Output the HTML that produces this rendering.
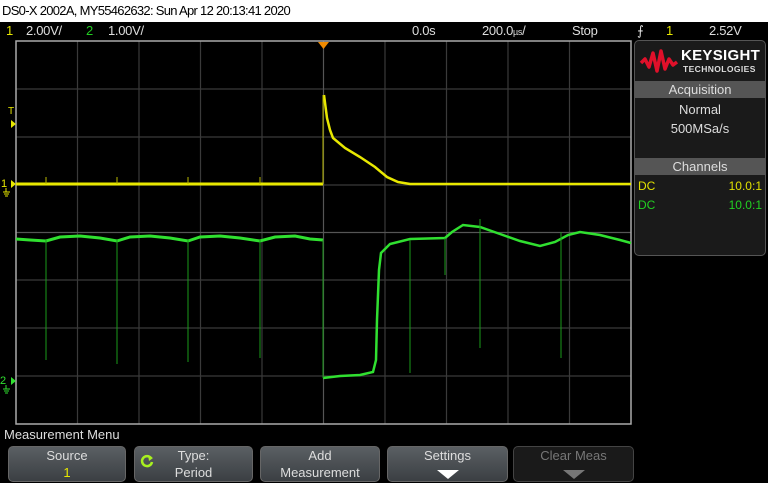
<!DOCTYPE html>
<html><head><meta charset="utf-8"><style>
*{margin:0;padding:0;box-sizing:border-box}
body{width:768px;height:483px;background:#000;position:relative;overflow:hidden;font-family:"Liberation Sans",sans-serif;}
.title{position:absolute;left:0;top:0;width:768px;height:22px;background:#fff;color:#000;font-size:13px;line-height:22px;padding-left:2px;letter-spacing:-0.7px}
.bar{position:absolute;top:22px;height:18px;font-size:13px;line-height:18px;color:#ddd;letter-spacing:-0.3px}
.panel{position:absolute;left:634px;width:132px;background:#1a1a1a;border:1px solid #555;border-radius:4px}
.hdr{background:#555;color:#ddd;text-align:center;font-size:13px;height:17px;line-height:17px}
.btn{position:absolute;top:446px;height:36px;border:1px solid #666;border-radius:5px;background:linear-gradient(#5a5f63,#3b3f43);color:#ddd;text-align:center;font-size:13px;line-height:17px}
</style></head><body>
<div class="title">DS0-X 2002A, MY55462632: Sun Apr 12 20:13:41 2020</div>
<div class="bar" style="left:6px;color:#e6e600">1</div>
<div class="bar" style="left:26px">2.00V/</div>
<div class="bar" style="left:86px;color:#22cc22">2</div>
<div class="bar" style="left:108px">1.00V/</div>
<div class="bar" style="left:412px">0.0s</div>
<div class="bar" style="left:482px">200.0<span style="font-size:9px">µs</span>/</div>
<div class="bar" style="left:572px">Stop</div>
<div class="bar" style="left:637px">⨍</div>
<div class="bar" style="left:666px;color:#e6e600">1</div>
<div class="bar" style="left:709px">2.52V</div>

<svg style="position:absolute;left:0;top:0" width="768" height="483">
<g stroke="#3a3a3a" stroke-width="1.2">
<line x1="77.5" y1="41" x2="77.5" y2="424"/><line x1="139" y1="41" x2="139" y2="424"/><line x1="200.5" y1="41" x2="200.5" y2="424"/><line x1="262" y1="41" x2="262" y2="424"/><line x1="385" y1="41" x2="385" y2="424"/><line x1="446.5" y1="41" x2="446.5" y2="424"/><line x1="508" y1="41" x2="508" y2="424"/><line x1="569.5" y1="41" x2="569.5" y2="424"/>
<line x1="16" y1="89" x2="631" y2="89"/><line x1="16" y1="137" x2="631" y2="137"/><line x1="16" y1="185" x2="631" y2="185"/><line x1="16" y1="280" x2="631" y2="280"/><line x1="16" y1="328" x2="631" y2="328"/><line x1="16" y1="376" x2="631" y2="376"/>
<line x1="323.5" y1="41" x2="323.5" y2="424" stroke="#555"/><line x1="16" y1="232.5" x2="631" y2="232.5" stroke="#555"/>
</g>
<rect x="16" y="41" width="615" height="383" fill="none" stroke="#aaa" stroke-width="1.5"/>
<polygon points="318,42 329,42 323.5,49" fill="#f08a00"/>
<polyline fill="none" stroke="#e8e800" stroke-width="3" points="16,184 323,184"/>
<polyline fill="none" stroke="#e8e800" stroke-width="2.5" points="324,95 327,118 330,130 333,138 345,148 360,157 375,167 387,177 398,182 410,184 631,184"/>
<g stroke="#b8b800" stroke-width="1"><line x1="46" y1="177" x2="46" y2="184"/><line x1="117" y1="177" x2="117" y2="184"/><line x1="188" y1="177" x2="188" y2="184"/><line x1="260" y1="177" x2="260" y2="184"/><line x1="323" y1="95" x2="323" y2="184"/></g>
<polyline fill="none" stroke="#30e030" stroke-width="3" points="16,239 30,240 46,241 60,237 80,236 100,238 117,241 130,237 150,236 170,238 188,241 200,237 220,236 240,238 260,241 275,237 295,236 310,239 323,240"/>
<polyline fill="none" stroke="#30e030" stroke-width="2.5" points="323,378 340,376 360,375 373,372 376,360 377,320 379,270 381,253 390,244 410,239 445,238 452,232 463,225 480,227 500,234 520,241 540,246 555,242 568,235 580,232 600,235 620,240 631,243"/>
<g stroke="#1a9a1a" stroke-width="1"><line x1="46" y1="240" x2="46" y2="360"/><line x1="117" y1="240" x2="117" y2="364"/><line x1="188" y1="240" x2="188" y2="362"/><line x1="260" y1="240" x2="260" y2="358"/><line x1="410" y1="240" x2="410" y2="373"/><line x1="445" y1="238" x2="445" y2="275"/><line x1="480" y1="219" x2="480" y2="348"/><line x1="561" y1="232" x2="561" y2="358"/><line x1="323" y1="240" x2="323" y2="378"/></g>
<text x="8" y="114" fill="#e8e800" font-size="10" font-family="Liberation Sans">T</text>
<polygon points="11,120 16,124 11,128" fill="#e8e800"/>
<text x="1" y="187" fill="#e8e800" font-size="11" font-family="Liberation Sans">1</text>
<polygon points="11,180 16,184 11,188" fill="#e8e800"/>
<path d="M6,188 v4 M3,192 h7 M4,194 h5 M5,196 h3" stroke="#e8e800" stroke-width="1"/>
<text x="0" y="384" fill="#30e030" font-size="11" font-family="Liberation Sans">2</text>
<polygon points="11,377 16,381 11,385" fill="#30e030"/>
<path d="M6,385 v4 M3,389 h7 M4,391 h5 M5,393 h3" stroke="#30e030" stroke-width="1"/>
</svg>

<div class="panel" style="top:40px;height:216px;border-radius:5px">
<div style="height:40px;position:relative">
<svg style="position:absolute;left:4px;top:6px" width="40" height="30"><polyline fill="none" stroke="#e0102a" stroke-width="3.5" stroke-linejoin="round" points="2,16 6,12 10,20 14,6 18,24 22,4 26,22 30,12 34,18 38,15"/></svg>
<div style="position:absolute;left:46px;top:6px;color:#fff;font-weight:bold;font-size:15px;letter-spacing:0.3px">KEYSIGHT</div>
<div style="position:absolute;left:48px;top:23px;color:#ddd;font-weight:bold;font-size:8.5px;letter-spacing:0.4px">TECHNOLOGIES</div>
</div>
<div class="hdr">Acquisition</div>
<div style="color:#ddd;text-align:center;font-size:13px;line-height:19px;margin-top:2px">Normal<br>500MSa/s</div>
<div class="hdr" style="margin-top:20px">Channels</div>
<div style="font-size:12px;line-height:19px;padding:0 3px;margin-top:2px">
<div style="color:#e0e000;display:flex;justify-content:space-between"><span>DC</span><span>10.0:1</span></div>
<div style="color:#22d022;display:flex;justify-content:space-between"><span>DC</span><span>10.0:1</span></div>
</div>
</div>

<div style="position:absolute;left:4px;top:427px;color:#ddd;font-size:13px">Measurement Menu</div>
<div class="btn" style="left:8px;width:118px">Source<br><span style="color:#e8e800">1</span></div>
<div class="btn" style="left:134px;width:119px">Type:<br>Period
<svg style="position:absolute;left:4px;top:6px" width="16" height="16"><path d="M12 5 A5 5 0 1 0 13 9" fill="none" stroke="#a8f020" stroke-width="2.5"/><polygon points="9,2 14,5 10,8" fill="#a8f020"/></svg></div>
<div class="btn" style="left:260px;width:120px">Add<br>Measurement</div>
<div class="btn" style="left:387px;width:121px">Settings<br><span style="display:inline-block;width:0;height:0;border-left:11px solid transparent;border-right:11px solid transparent;border-top:9px solid #fff;margin-top:6px"></span></div>
<div class="btn" style="left:513px;width:121px;background:#1a1a1a;color:#777;border-color:#444">Clear Meas<br><span style="display:inline-block;width:0;height:0;border-left:11px solid transparent;border-right:11px solid transparent;border-top:9px solid #777;margin-top:6px"></span></div>
</body></html>
